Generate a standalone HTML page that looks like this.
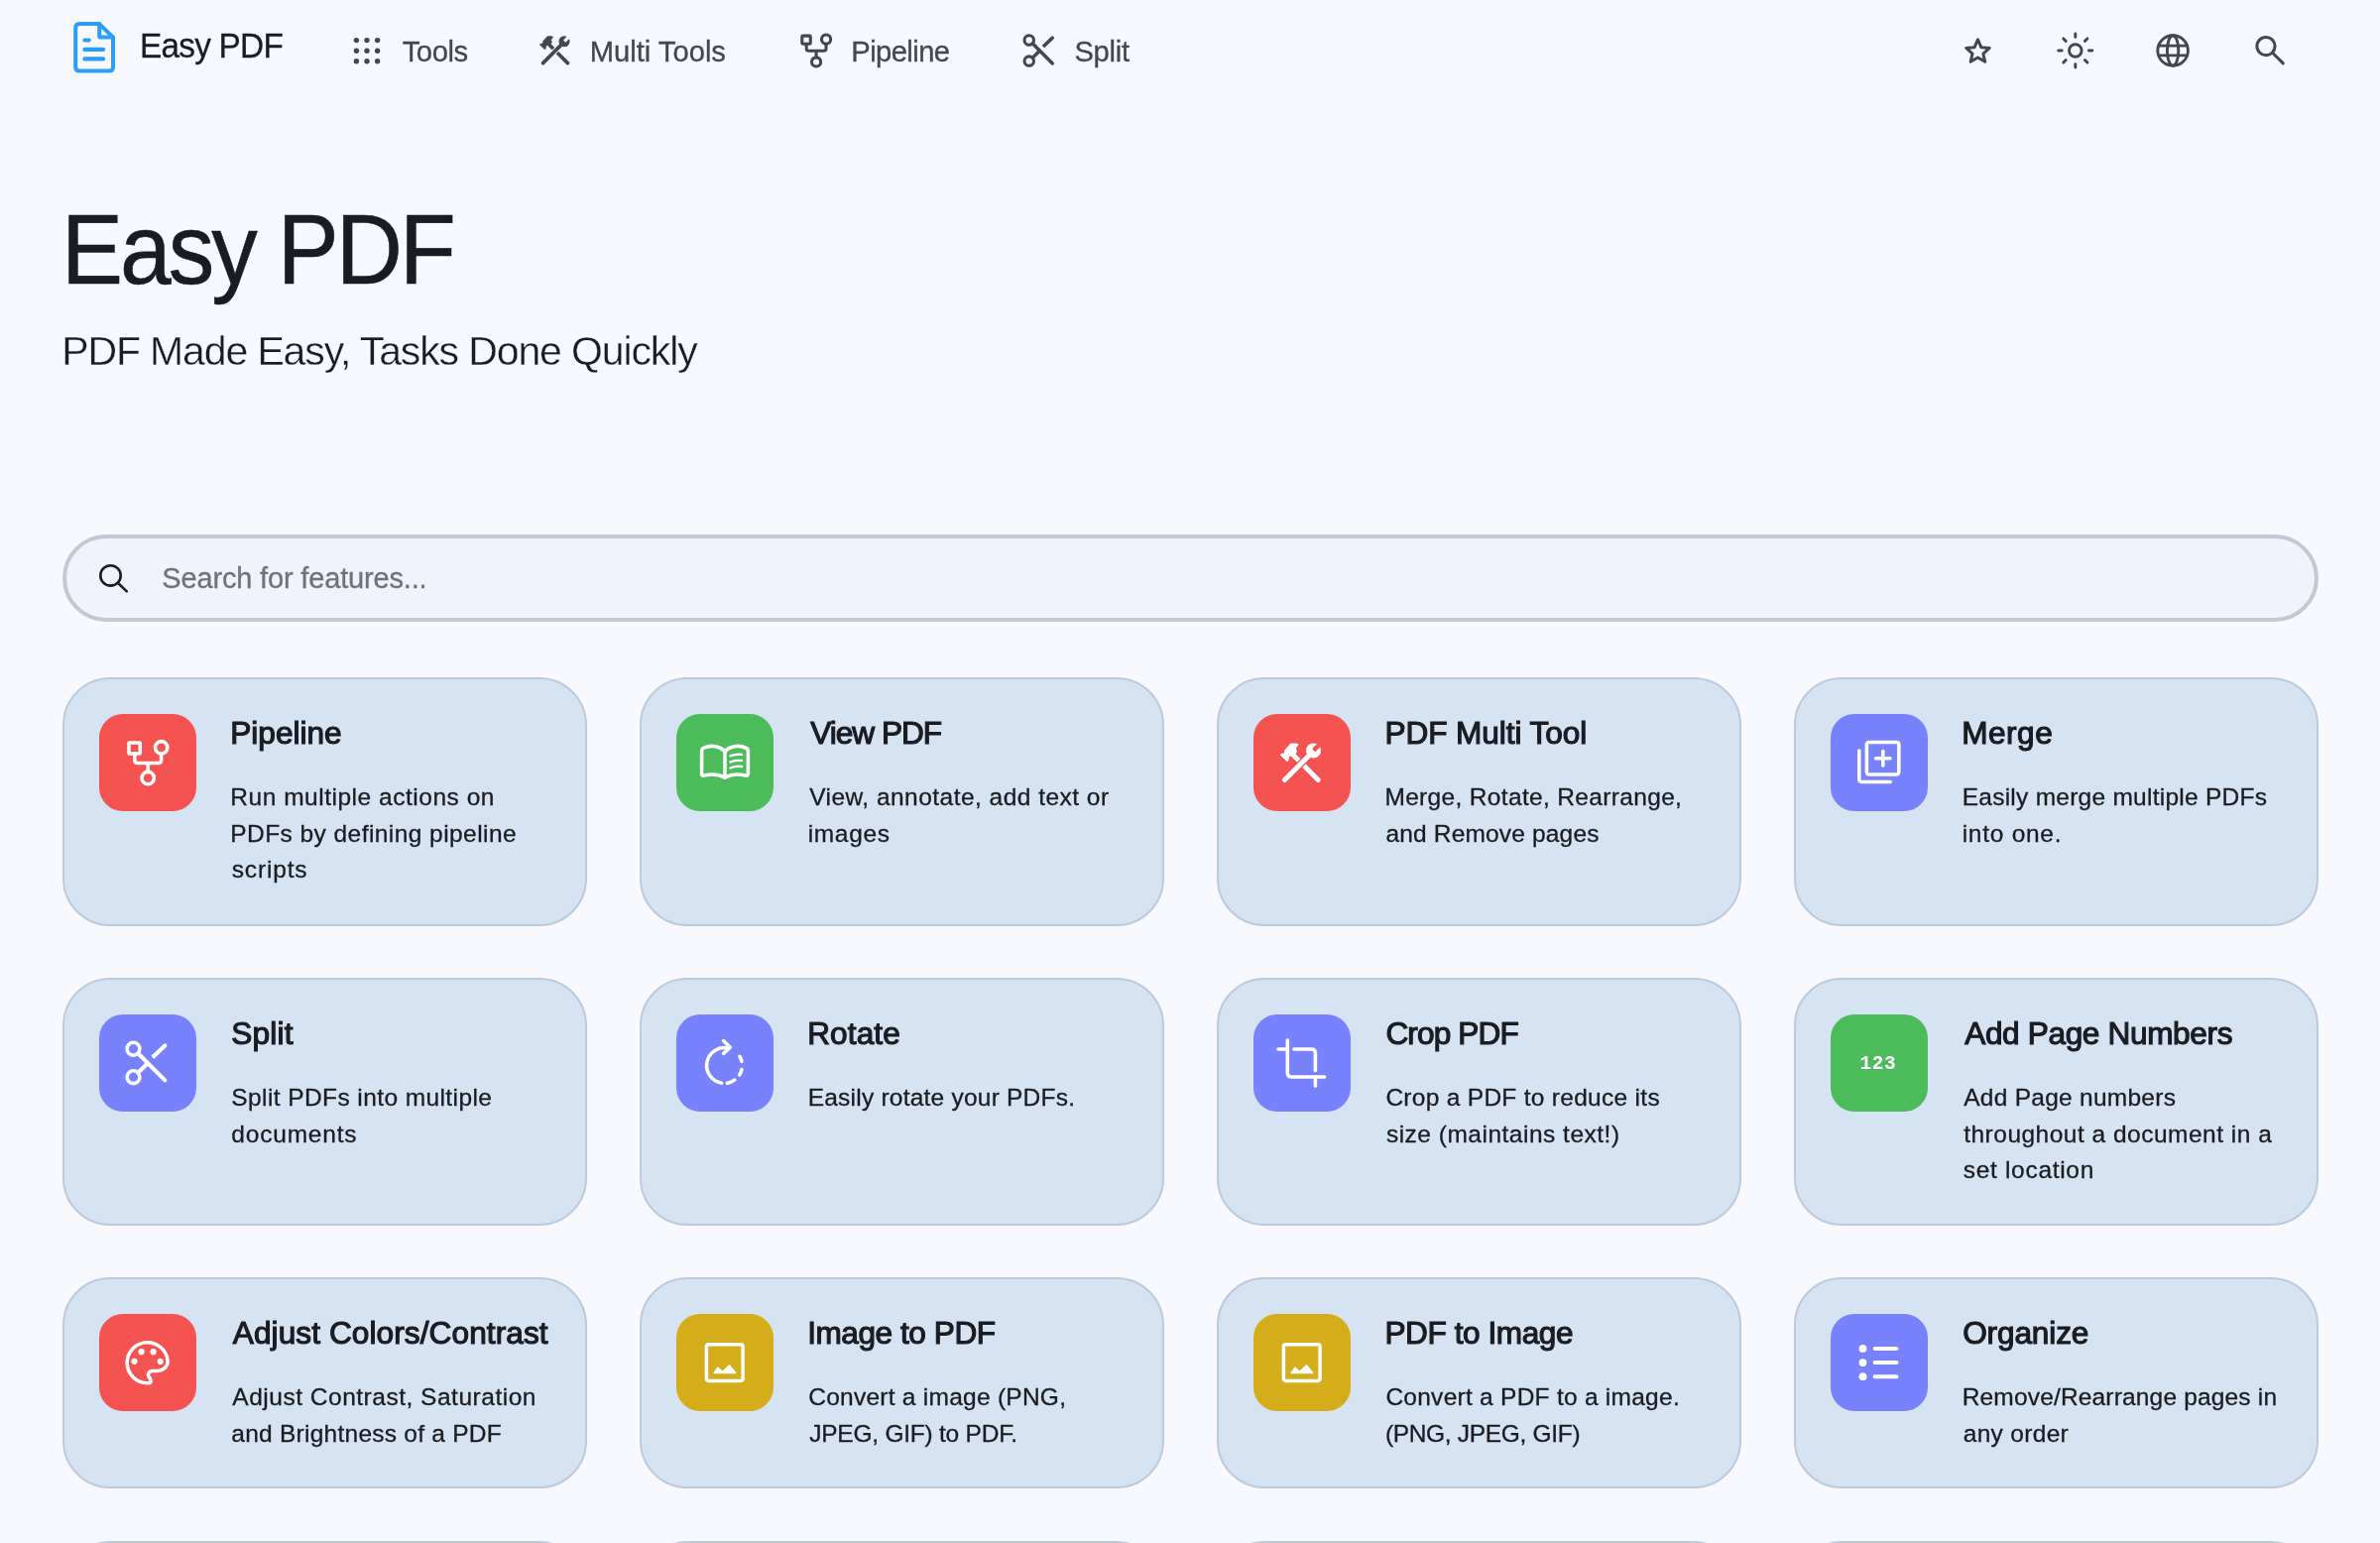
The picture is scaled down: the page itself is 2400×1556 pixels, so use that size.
<!DOCTYPE html>
<html lang="en"><head><meta charset="utf-8"><title>Easy PDF</title>
<style>
html,body{margin:0;padding:0}
body{width:2400px;height:1556px;overflow:hidden;position:relative;background:#f8f9fe;font-family:"Liberation Sans", sans-serif;}
.t{position:absolute;white-space:nowrap;margin:0;padding:0;font-weight:400;transform-origin:left center;text-decoration:none}
.card{position:absolute;box-sizing:border-box;width:529px;background:#d5e3f3;border:2px solid #bdcadc;border-radius:48px}
.ib{position:absolute;width:98px;height:98px;border-radius:24px}
.ib svg{position:absolute;left:0;top:0}
svg{display:block;overflow:visible}
#search{position:absolute;left:63px;top:539px;width:2275px;height:88px;box-sizing:border-box;border:4px solid #c4c8d3;border-radius:44px;background:#f0f2fd}
.abs{position:absolute;left:0;top:0}
#page{position:absolute;left:0;top:0;width:2400px;height:1556px;overflow:hidden;will-change:transform}
</style></head><body><div id="page">

<svg class="abs" width="2400" height="700" viewBox="0 0 2400 700"><g fill="none" stroke="#2b9ef9" stroke-width="4" stroke-linejoin="round" stroke-linecap="round"><path d="M80.4 24.1H100.2L114 37.6V67.4Q114 71.6 109.8 71.6H80.4Q76.2 71.6 76.2 67.4V28.3Q76.2 24.1 80.4 24.1Z"/><path d="M100.2 24.1V36.2Q100.2 37.6 101.6 37.6H114"/><path d="M85.4 40.5H89.7M85.4 49.9H104.1M85.4 59.4H104.1" stroke-width="4.2"/></g><circle cx="359.4" cy="40.6" r="2.7" fill="#43474e"/><circle cx="359.4" cy="51.2" r="2.7" fill="#43474e"/><circle cx="359.4" cy="61.8" r="2.7" fill="#43474e"/><circle cx="370" cy="40.6" r="2.7" fill="#43474e"/><circle cx="370" cy="51.2" r="2.7" fill="#43474e"/><circle cx="370" cy="61.8" r="2.7" fill="#43474e"/><circle cx="380.6" cy="40.6" r="2.7" fill="#43474e"/><circle cx="380.6" cy="51.2" r="2.7" fill="#43474e"/><circle cx="380.6" cy="61.8" r="2.7" fill="#43474e"/><g transform="translate(524.24 14.49) scale(0.74)"><path d="M65.2 66.4L40.6 41.8" stroke="#43474e" stroke-width="4.9" stroke-linecap="round" fill="none"/><path d="M31.5 36.8L37.5 30L44.2 30L45 31L42.2 35L43.2 36.5L43.2 38.8L41.6 40.6L37.4 42.4L35.6 42.8L34.9 47.4L33.4 47.4L27.4 41.4L27.4 40.7L31.5 39.6Z" fill="#43474e" stroke="#43474e" stroke-width="0.9" stroke-linejoin="round"/><path d="M34 63.9L56 41.9" stroke="#f8f9fe" stroke-width="7.5" stroke-linecap="butt" fill="none"/><path d="M31.5 66.4L57.5 40.4" stroke="#43474e" stroke-width="4.9" stroke-linecap="round" fill="none"/><circle cx="60.5" cy="36.9" r="7.5" fill="#43474e"/><path d="M60.7 36.7L69 28.4" stroke="#f8f9fe" stroke-width="4.5" stroke-linecap="butt" fill="none"/></g><g transform="translate(786.69 14.64) scale(0.74)"><g fill="none" stroke="#43474e" stroke-width="4.15" stroke-linecap="round" stroke-linejoin="round"><rect x="29.9" y="29" width="11.4" height="11" rx="1"/><circle cx="62.7" cy="33.8" r="6.2"/><circle cx="49.2" cy="64.6" r="6.2"/><path d="M35.8 40V46.4Q35.8 49.4 38.8 49.4H59.6Q62.6 49.4 62.6 46.4V40M49.2 49.4V58.4"/></g></g><g transform="translate(1012.23 14.83) scale(0.74)"><g fill="none" stroke="#43474e" stroke-width="4.15" stroke-linecap="round" stroke-linejoin="round"><circle cx="34.5" cy="34.7" r="6.4"/><circle cx="34.5" cy="63.2" r="6.4"/><path d="M39.2 39.2L66.3 66.4" stroke-width="4.75"/><path d="M39.2 58.7L48.6 49.6" stroke-width="4.75"/><path d="M66.3 31.5L55.2 42" stroke-width="4.75"/><path d="M55.2 42L53.9 43.3" stroke-width="4.75" stroke-linecap="butt"/></g></g><path d="M1994.45 39.90L1997.80 47.69L2006.24 48.47L1999.87 54.06L2001.74 62.33L1994.45 58.00L1987.16 62.33L1989.03 54.06L1982.66 48.47L1991.10 47.69Z" fill="none" stroke="#43474e" stroke-width="3" stroke-linejoin="round"/><circle cx="2092.8" cy="51" r="6.3" fill="none" stroke="#43474e" stroke-width="2.9"/><path d="M2106.40 51.00L2109.90 51.00M2102.42 60.62L2104.89 63.09M2092.80 64.60L2092.80 68.10M2083.18 60.62L2080.71 63.09M2079.20 51.00L2075.70 51.00M2083.18 41.38L2080.71 38.91M2092.80 37.40L2092.80 33.90M2102.42 41.38L2104.89 38.91" fill="none" stroke="#43474e" stroke-width="2.9" stroke-linecap="round"/><g fill="none" stroke="#43474e" stroke-width="2.9"><circle cx="2191.1" cy="51" r="15.3"/><ellipse cx="2191.1" cy="51" rx="5.7" ry="15.3"/><path d="M2176.6 46.1H2205.6M2176.6 55.9H2205.6"/></g><g fill="none" stroke="#43474e" stroke-width="3" stroke-linecap="round"><circle cx="2285" cy="46.6" r="9.1"/><path d="M2291.6 53.2L2302.3 63.9"/></g></svg>
<div id="search"></div>
<svg class="abs" width="200" height="700" viewBox="0 0 200 700"><g fill="none" stroke="#191c20" stroke-width="2.6" stroke-linecap="round"><circle cx="111.5" cy="580.4" r="10.2"/><path d="M118.8 587.7L127.8 596.4"/></g></svg>
<div class="card" style="left:63.0px;top:683.0px;height:250.5px"></div>
<div class="card" style="left:645.0px;top:683.0px;height:250.5px"></div>
<div class="card" style="left:1227.0px;top:683.0px;height:250.5px"></div>
<div class="card" style="left:1809.0px;top:683.0px;height:250.5px"></div>
<div class="card" style="left:63.0px;top:986.0px;height:249.5px"></div>
<div class="card" style="left:645.0px;top:986.0px;height:249.5px"></div>
<div class="card" style="left:1227.0px;top:986.0px;height:249.5px"></div>
<div class="card" style="left:1809.0px;top:986.0px;height:249.5px"></div>
<div class="card" style="left:63.0px;top:1288.0px;height:213.0px"></div>
<div class="card" style="left:645.0px;top:1288.0px;height:213.0px"></div>
<div class="card" style="left:1227.0px;top:1288.0px;height:213.0px"></div>
<div class="card" style="left:1809.0px;top:1288.0px;height:213.0px"></div>
<div class="card" style="left:63.0px;top:1553.5px;height:213.0px"></div>
<div class="card" style="left:645.0px;top:1553.5px;height:213.0px"></div>
<div class="card" style="left:1227.0px;top:1553.5px;height:213.0px"></div>
<div class="card" style="left:1809.0px;top:1553.5px;height:213.0px"></div>
<div class="ib" style="left:100.0px;top:720.1px;background:#f55252"><svg width="98" height="98" viewBox="0 0 98 98"><g fill="none" stroke="#fff" stroke-width="3.55" stroke-linecap="round" stroke-linejoin="round"><rect x="29.9" y="29" width="11.4" height="11" rx="1"/><circle cx="62.7" cy="33.8" r="6.2"/><circle cx="49.2" cy="64.6" r="6.2"/><path d="M35.8 40V46.4Q35.8 49.4 38.8 49.4H59.6Q62.6 49.4 62.6 46.4V40M49.2 49.4V58.4"/></g></svg></div>
<div class="ib" style="left:682.0px;top:720.1px;background:#4bbc59"><svg width="98" height="98" viewBox="0 0 98 98"><g fill="none" stroke="#fff" stroke-width="3.55" stroke-linecap="round" stroke-linejoin="round"><path d="M49 37.8C45 33.4 35.5 30.2 27.9 34.2Q25.6 35.2 25.6 37.6V60Q25.6 62.6 28.2 62C35.5 60.3 43.5 61 49 64.2"/><path d="M49 37.8C53 33.4 62.5 30.2 70.1 34.2Q72.4 35.2 72.4 37.6V60Q72.4 62.6 69.8 62C62.5 60.3 54.5 61 49 64.2"/><path d="M49 37.8V64.2"/><g stroke-width="2.56"><path d="M54.6 42.3Q60 40.2 66 40.9M54.6 48.4Q60 46.3 66 47M54.6 54.4Q60 52.3 66 53"/></g></g></svg></div>
<div class="ib" style="left:1264.0px;top:720.1px;background:#f55252"><svg width="98" height="98" viewBox="0 0 98 98"><path d="M65.2 66.4L40.6 41.8" stroke="#fff" stroke-width="4.9" stroke-linecap="round" fill="none"/><path d="M31.5 36.8L37.5 30L44.2 30L45 31L42.2 35L43.2 36.5L43.2 38.8L41.6 40.6L37.4 42.4L35.6 42.8L34.9 47.4L33.4 47.4L27.4 41.4L27.4 40.7L31.5 39.6Z" fill="#fff" stroke="#fff" stroke-width="0.9" stroke-linejoin="round"/><path d="M34 63.9L56 41.9" stroke="#f55252" stroke-width="7.5" stroke-linecap="butt" fill="none"/><path d="M31.5 66.4L57.5 40.4" stroke="#fff" stroke-width="4.9" stroke-linecap="round" fill="none"/><circle cx="60.5" cy="36.9" r="7.5" fill="#fff"/><path d="M60.7 36.7L69 28.4" stroke="#f55252" stroke-width="4.5" stroke-linecap="butt" fill="none"/></svg></div>
<div class="ib" style="left:1846.0px;top:720.1px;background:#7882fc"><svg width="98" height="98" viewBox="0 0 98 98"><g fill="none" stroke="#fff" stroke-width="3.55" stroke-linecap="round" stroke-linejoin="round"><rect x="36.4" y="28.4" width="32.4" height="32.6" rx="2.4"/><path d="M28.8 37V65.8Q28.8 68.4 31.4 68.4H60.2"/><path d="M52.8 37.6V52M45.5 44.8H60"/></g></svg></div>
<div class="ib" style="left:100.0px;top:1023.1px;background:#7882fc"><svg width="98" height="98" viewBox="0 0 98 98"><g fill="none" stroke="#fff" stroke-width="3.55" stroke-linecap="round" stroke-linejoin="round"><circle cx="34.5" cy="34.7" r="6.4"/><circle cx="34.5" cy="63.2" r="6.4"/><path d="M39.2 39.2L66.3 66.4" stroke-width="4.1499999999999995"/><path d="M39.2 58.7L48.6 49.6" stroke-width="4.1499999999999995"/><path d="M66.3 31.5L55.2 42" stroke-width="4.1499999999999995"/><path d="M55.2 42L53.9 43.3" stroke-width="4.1499999999999995" stroke-linecap="butt"/></g></svg></div>
<div class="ib" style="left:682.0px;top:1023.1px;background:#7882fc"><svg width="98" height="98" viewBox="0 0 98 98"><g fill="none" stroke="#fff" stroke-width="3.55" stroke-linecap="round" stroke-linejoin="round"><path d="M45.70 69.18A17.9 17.9 0 1 1 52.22 33.99M63.84 42.28A17.9 17.9 0 0 1 65.94 47.47M65.94 55.53A17.9 17.9 0 0 1 63.68 60.99M58.77 66.16A17.9 17.9 0 0 1 51.30 69.18"/><path d="M47.6 26.6L54.4 33.2L47.6 39.4"/></g></svg></div>
<div class="ib" style="left:1264.0px;top:1023.1px;background:#7882fc"><svg width="98" height="98" viewBox="0 0 98 98"><g fill="none" stroke="#fff" stroke-width="3.55" stroke-linecap="round" stroke-linejoin="round"><path d="M34.3 25.9V59Q34.3 62.9 38.2 62.9H71.6"/><path d="M25.1 34.9H34.3M40.9 34.9H58.5Q62.4 34.9 62.4 38.8V56.6M62.4 62.9V72.1"/></g></svg></div>
<div class="ib" style="left:1846.0px;top:1023.1px;background:#4bbc59"><svg width="98" height="98" viewBox="0 0 98 98"><text x="47.9" y="55.2" text-anchor="middle" font-family="'Liberation Mono', monospace" font-weight="700" font-size="19.5" letter-spacing="0.6" fill="#fff">123</text></svg></div>
<div class="ib" style="left:100.0px;top:1325.1px;background:#f55252"><svg width="98" height="98" viewBox="0 0 98 98"><g fill="none" stroke="#fff" stroke-width="3.55" stroke-linecap="round" stroke-linejoin="round"><path d="M48.7 69.8A20.5 20.5 0 0 1 28.2 49.3A20.5 20.5 0 0 1 48.7 28.8A20.5 20.5 0 0 1 69.08 47.1C69.3 53.3 64.6 57.4 58.6 57.4H54C50.6 57.4 48.6 60.2 49.9 62.9C50.9 65 52.7 66.2 52.2 67.9C51.8 69.3 50.4 69.8 48.7 69.8Z"/></g><g fill="#fff"><circle cx="42.6" cy="38.2" r="3.1"/><circle cx="54.6" cy="38.2" r="3.1"/><circle cx="35.5" cy="47.8" r="3.1"/><circle cx="61.7" cy="47.8" r="3.1"/></g></svg></div>
<div class="ib" style="left:682.0px;top:1325.1px;background:#d5ad1b"><svg width="98" height="98" viewBox="0 0 98 98"><rect x="30.4" y="30.7" width="36.7" height="36.7" rx="2.3" fill="none" stroke="#fff" stroke-width="3.55"/><path d="M38 59.6L41.8 54L46.7 58.2L53.5 51.6L60 59.6Z" fill="#fff" stroke="#fff" stroke-width="1.2" stroke-linejoin="round"/></svg></div>
<div class="ib" style="left:1264.0px;top:1325.1px;background:#d5ad1b"><svg width="98" height="98" viewBox="0 0 98 98"><rect x="30.4" y="30.7" width="36.7" height="36.7" rx="2.3" fill="none" stroke="#fff" stroke-width="3.55"/><path d="M38 59.6L41.8 54L46.7 58.2L53.5 51.6L60 59.6Z" fill="#fff" stroke="#fff" stroke-width="1.2" stroke-linejoin="round"/></svg></div>
<div class="ib" style="left:1846.0px;top:1325.1px;background:#7882fc"><svg width="98" height="98" viewBox="0 0 98 98"><g fill="#fff"><circle cx="32.5" cy="34.9" r="3.9"/><circle cx="32.5" cy="49.1" r="3.9"/><circle cx="32.5" cy="63.2" r="3.9"/></g><path d="M44.6 34.9H66.5M44.6 49.1H66.5M44.6 63.2H66.5" stroke="#fff" stroke-width="4" stroke-linecap="round" fill="none"/></svg></div>
<a class="t" id="t0" style="left:140.62px;top:25.30px;font-size:35.5px;line-height:43px;letter-spacing:-0.817px;color:#191c20;-webkit-text-stroke:0.3px #191c20;transform:scaleX(0.94);">Easy PDF</a>
<span class="t" id="t1" style="left:405.70px;top:33.80px;font-size:29.2px;line-height:36px;letter-spacing:-0.436px;color:#43474e;-webkit-text-stroke:0.3px #43474e;">Tools</span>
<span class="t" id="t2" style="left:594.70px;top:33.80px;font-size:29.2px;line-height:36px;letter-spacing:-0.008px;color:#43474e;-webkit-text-stroke:0.3px #43474e;">Multi Tools</span>
<span class="t" id="t3" style="left:858.30px;top:33.80px;font-size:29.2px;line-height:36px;letter-spacing:-0.589px;color:#43474e;-webkit-text-stroke:0.3px #43474e;">Pipeline</span>
<span class="t" id="t4" style="left:1083.40px;top:33.80px;font-size:29.2px;line-height:36px;letter-spacing:-0.242px;color:#43474e;-webkit-text-stroke:0.3px #43474e;">Split</span>
<h1 class="t" id="t5" style="left:62.46px;top:190.70px;font-size:100px;line-height:120px;letter-spacing:-3.192px;color:#191c20;-webkit-text-stroke:0.6px #191c20;transform:scaleX(0.93);">Easy PDF</h1>
<p class="t" id="t6" style="left:62.20px;top:328.70px;font-size:41px;line-height:50px;letter-spacing:-1.126px;color:#191c20;-webkit-text-stroke:0.35px #f8f9fe;">PDF Made Easy, Tasks Done Quickly</p>
<span class="t" id="t7" style="left:163.30px;top:565.70px;font-size:29px;line-height:35px;letter-spacing:-0.164px;color:#6f727a;-webkit-text-stroke:0.3px #6f727a;">Search for features...</span>
<h2 class="t" id="t8" style="left:232.30px;top:719.70px;font-size:31.6px;line-height:38px;letter-spacing:-0.020px;color:#191c20;-webkit-text-stroke:1.15px #191c20;">Pipeline</h2>
<p class="t" id="t9" style="left:232.30px;top:789.10px;font-size:24.5px;line-height:30px;letter-spacing:0.521px;color:#191c20;-webkit-text-stroke:0.3px #191c20;">Run multiple actions on</p>
<p class="t" id="t10" style="left:232.30px;top:825.75px;font-size:24.5px;line-height:30px;letter-spacing:0.437px;color:#191c20;-webkit-text-stroke:0.3px #191c20;">PDFs by defining pipeline</p>
<p class="t" id="t11" style="left:233.80px;top:862.40px;font-size:24.5px;line-height:30px;letter-spacing:0.828px;color:#191c20;-webkit-text-stroke:0.3px #191c20;">scripts</p>
<h2 class="t" id="t12" style="left:817.20px;top:719.70px;font-size:31.6px;line-height:38px;letter-spacing:-0.996px;color:#191c20;-webkit-text-stroke:1.15px #191c20;">View PDF</h2>
<p class="t" id="t13" style="left:816.20px;top:789.10px;font-size:24.5px;line-height:30px;letter-spacing:0.469px;color:#191c20;-webkit-text-stroke:0.3px #191c20;">View, annotate, add text or</p>
<p class="t" id="t14" style="left:814.70px;top:825.75px;font-size:24.5px;line-height:30px;letter-spacing:0.654px;color:#191c20;-webkit-text-stroke:0.3px #191c20;">images</p>
<h2 class="t" id="t15" style="left:1396.40px;top:719.70px;font-size:31.6px;line-height:38px;letter-spacing:-0.068px;color:#191c20;-webkit-text-stroke:1.15px #191c20;">PDF Multi Tool</h2>
<p class="t" id="t16" style="left:1396.40px;top:789.10px;font-size:24.5px;line-height:30px;letter-spacing:0.337px;color:#191c20;-webkit-text-stroke:0.3px #191c20;">Merge, Rotate, Rearrange,</p>
<p class="t" id="t17" style="left:1397.40px;top:825.75px;font-size:24.5px;line-height:30px;letter-spacing:0.172px;color:#191c20;-webkit-text-stroke:0.3px #191c20;">and Remove pages</p>
<h2 class="t" id="t18" style="left:1978.20px;top:719.70px;font-size:31.6px;line-height:38px;letter-spacing:0.505px;color:#191c20;-webkit-text-stroke:1.15px #191c20;">Merge</h2>
<p class="t" id="t19" style="left:1978.70px;top:789.10px;font-size:24.5px;line-height:30px;letter-spacing:0.254px;color:#191c20;-webkit-text-stroke:0.3px #191c20;">Easily merge multiple PDFs</p>
<p class="t" id="t20" style="left:1978.70px;top:825.75px;font-size:24.5px;line-height:30px;letter-spacing:0.727px;color:#191c20;-webkit-text-stroke:0.3px #191c20;">into one.</p>
<h2 class="t" id="t21" style="left:233.30px;top:1022.70px;font-size:31.6px;line-height:38px;letter-spacing:0.205px;color:#191c20;-webkit-text-stroke:1.15px #191c20;">Split</h2>
<p class="t" id="t22" style="left:233.30px;top:1092.10px;font-size:24.5px;line-height:30px;letter-spacing:0.407px;color:#191c20;-webkit-text-stroke:0.3px #191c20;">Split PDFs into multiple</p>
<p class="t" id="t23" style="left:233.30px;top:1128.75px;font-size:24.5px;line-height:30px;letter-spacing:0.801px;color:#191c20;-webkit-text-stroke:0.3px #191c20;">documents</p>
<h2 class="t" id="t24" style="left:814.20px;top:1022.70px;font-size:31.6px;line-height:38px;letter-spacing:0.097px;color:#191c20;-webkit-text-stroke:1.15px #191c20;">Rotate</h2>
<p class="t" id="t25" style="left:814.70px;top:1092.10px;font-size:24.5px;line-height:30px;letter-spacing:0.225px;color:#191c20;-webkit-text-stroke:0.3px #191c20;">Easily rotate your PDFs.</p>
<h2 class="t" id="t26" style="left:1397.40px;top:1022.70px;font-size:31.6px;line-height:38px;letter-spacing:-0.878px;color:#191c20;-webkit-text-stroke:1.15px #191c20;">Crop PDF</h2>
<p class="t" id="t27" style="left:1397.40px;top:1092.10px;font-size:24.5px;line-height:30px;letter-spacing:0.289px;color:#191c20;-webkit-text-stroke:0.3px #191c20;">Crop a PDF to reduce its</p>
<p class="t" id="t28" style="left:1397.90px;top:1128.75px;font-size:24.5px;line-height:30px;letter-spacing:0.500px;color:#191c20;-webkit-text-stroke:0.3px #191c20;">size (maintains text!)</p>
<h2 class="t" id="t29" style="left:1981.20px;top:1022.70px;font-size:31.6px;line-height:38px;letter-spacing:-0.362px;color:#191c20;-webkit-text-stroke:1.15px #191c20;">Add Page Numbers</h2>
<p class="t" id="t30" style="left:1980.20px;top:1092.10px;font-size:24.5px;line-height:30px;letter-spacing:0.267px;color:#191c20;-webkit-text-stroke:0.3px #191c20;">Add Page numbers</p>
<p class="t" id="t31" style="left:1980.20px;top:1128.75px;font-size:24.5px;line-height:30px;letter-spacing:0.493px;color:#191c20;-webkit-text-stroke:0.3px #191c20;">throughout a document in a</p>
<p class="t" id="t32" style="left:1979.70px;top:1165.40px;font-size:24.5px;line-height:30px;letter-spacing:0.699px;color:#191c20;-webkit-text-stroke:0.3px #191c20;">set location</p>
<h2 class="t" id="t33" style="left:234.80px;top:1324.70px;font-size:31.6px;line-height:38px;letter-spacing:0.082px;color:#191c20;-webkit-text-stroke:1.15px #191c20;">Adjust Colors/Contrast</h2>
<p class="t" id="t34" style="left:234.30px;top:1394.10px;font-size:24.5px;line-height:30px;letter-spacing:0.513px;color:#191c20;-webkit-text-stroke:0.3px #191c20;">Adjust Contrast, Saturation</p>
<p class="t" id="t35" style="left:233.30px;top:1430.75px;font-size:24.5px;line-height:30px;letter-spacing:0.252px;color:#191c20;-webkit-text-stroke:0.3px #191c20;">and Brightness of a PDF</p>
<h2 class="t" id="t36" style="left:814.20px;top:1324.70px;font-size:31.6px;line-height:38px;letter-spacing:-0.455px;color:#191c20;-webkit-text-stroke:1.15px #191c20;">Image to PDF</h2>
<p class="t" id="t37" style="left:815.20px;top:1394.10px;font-size:24.5px;line-height:30px;letter-spacing:0.259px;color:#191c20;-webkit-text-stroke:0.3px #191c20;">Convert a image (PNG,</p>
<p class="t" id="t38" style="left:816.20px;top:1430.75px;font-size:24.5px;line-height:30px;letter-spacing:-0.231px;color:#191c20;-webkit-text-stroke:0.3px #191c20;">JPEG, GIF) to PDF.</p>
<h2 class="t" id="t39" style="left:1396.40px;top:1324.70px;font-size:31.6px;line-height:38px;letter-spacing:-0.430px;color:#191c20;-webkit-text-stroke:1.15px #191c20;">PDF to Image</h2>
<p class="t" id="t40" style="left:1397.40px;top:1394.10px;font-size:24.5px;line-height:30px;letter-spacing:0.261px;color:#191c20;-webkit-text-stroke:0.3px #191c20;">Convert a PDF to a image.</p>
<p class="t" id="t41" style="left:1396.90px;top:1430.75px;font-size:24.5px;line-height:30px;letter-spacing:-0.320px;color:#191c20;-webkit-text-stroke:0.3px #191c20;">(PNG, JPEG, GIF)</p>
<h2 class="t" id="t42" style="left:1979.20px;top:1324.70px;font-size:31.6px;line-height:38px;letter-spacing:-0.146px;color:#191c20;-webkit-text-stroke:1.15px #191c20;">Organize</h2>
<p class="t" id="t43" style="left:1978.70px;top:1394.10px;font-size:24.5px;line-height:30px;letter-spacing:0.170px;color:#191c20;-webkit-text-stroke:0.3px #191c20;">Remove/Rearrange pages in</p>
<p class="t" id="t44" style="left:1979.70px;top:1430.75px;font-size:24.5px;line-height:30px;letter-spacing:0.319px;color:#191c20;-webkit-text-stroke:0.3px #191c20;">any order</p>
</div></body></html>
